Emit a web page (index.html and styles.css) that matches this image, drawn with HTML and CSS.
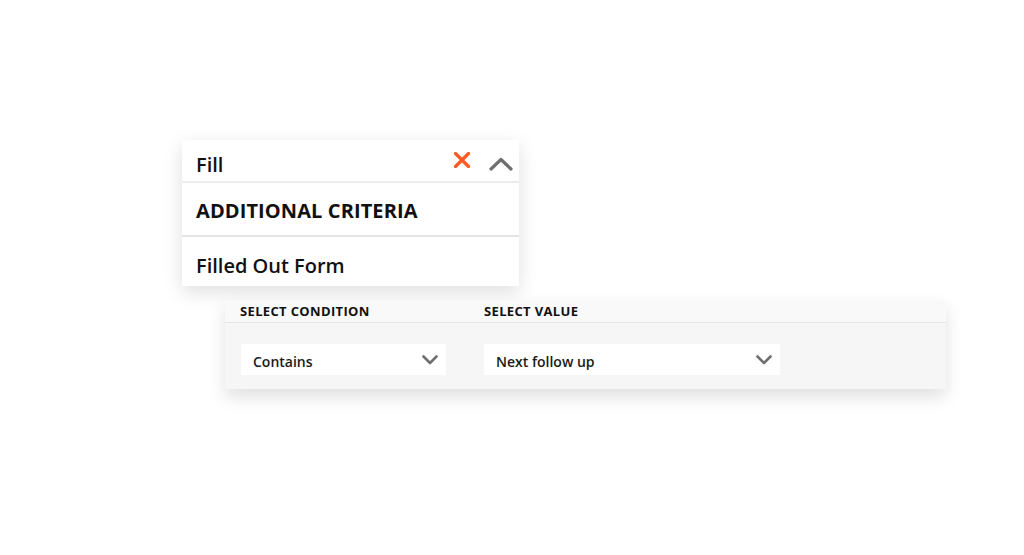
FILE: index.html
```html
<!DOCTYPE html>
<html lang="en">
<head>
<meta charset="utf-8">
<link rel="stylesheet" href="styles.css">
</head>
<body>
<div class="stage">
  <div class="filter-card">
    <div class="filter-head">
      <span class="filter-title">Fill</span>
      <span class="filter-icons">
        <svg class="icon-x" width="18" height="16" viewBox="0 0 18 16"><path d="M2.5 1.5 L15.5 14.5 M15.5 1.5 L2.5 14.5" stroke="#ff5a24" stroke-width="3.2" stroke-linecap="round" fill="none"/></svg>
        <svg class="icon-up" width="24" height="14" viewBox="0 0 24 14"><path d="M2 12 L12 2.5 L22 12" stroke="#6f6f6f" stroke-width="3.2" stroke-linecap="round" stroke-linejoin="round" fill="none"/></svg>
      </span>
    </div>
    <div class="filter-row filter-section">ADDITIONAL CRITERIA</div>
    <div class="filter-row filter-item">Filled Out Form</div>
  </div>

  <div class="cond-card">
    <div class="cond-head">
      <div class="cond-col cond-col-1">SELECT CONDITION</div>
      <div class="cond-col">SELECT VALUE</div>
    </div>
    <div class="cond-body">
      <div class="cond-col cond-col-1">
        <div class="select select-cond">
          <span>Contains</span>
          <svg width="16" height="10" viewBox="0 0 16 10"><path d="M1.5 1.5 L8 8 L14.5 1.5" stroke="#6f6f6f" stroke-width="2.6" stroke-linecap="round" stroke-linejoin="round" fill="none"/></svg>
        </div>
      </div>
      <div class="cond-col">
        <div class="select select-value">
          <span>Next follow up</span>
          <svg width="16" height="10" viewBox="0 0 16 10"><path d="M1.5 1.5 L8 8 L14.5 1.5" stroke="#6f6f6f" stroke-width="2.6" stroke-linecap="round" stroke-linejoin="round" fill="none"/></svg>
        </div>
      </div>
    </div>
  </div>
</div>
</body>
</html>
```

FILE: styles.css
```css
* { box-sizing: border-box; }
html, body { margin: 0; padding: 0; background: #ffffff; }
body {
  width: 1024px;
  height: 555px;
  overflow: hidden;
  font-family: "Open Sans", "Noto Sans", "Liberation Sans", sans-serif;
  color: #111111;
}
.stage {
  padding: 140px 0 0 182px;
}
.filter-card {
  width: 337px;
  background: #ffffff;
  box-shadow: 0 6px 18px rgba(0,0,0,0.13);
}
.filter-head {
  height: 43px;
  display: flex;
  align-items: center;
  justify-content: space-between;
  padding: 7px 6px 0 14px;
  border-bottom: 2px solid #ececec;
}
.filter-title {
  font-size: 20px;
  font-weight: 600;
}
.filter-icons {
  display: flex;
  align-items: center;
  gap: 18px;
  padding-bottom: 9px;
}
.icon-up { margin-top: 9px; }
.filter-row {
  display: flex;
  align-items: center;
  padding-left: 14px;
}
.filter-section {
  height: 54px;
  font-size: 20px;
  font-weight: 700;
  letter-spacing: 0.1px;
  border-bottom: 2px solid #e4e4e4;
  padding-top: 3px;
}
.filter-item {
  height: 49px;
  font-size: 20px;
  font-weight: 600;
  padding-top: 8px;
}
.cond-card {
  margin: 14px 0 0 43px;
  width: 721px;
  background: #f6f6f6;
  box-shadow: 0 8px 16px rgba(0,0,0,0.12);
}
.cond-head {
  height: 23px;
  display: flex;
  align-items: center;
  padding-left: 15px;
  background: #f9f9f9;
  border-bottom: 1px solid #e6e6e6;
  font-size: 13px;
  font-weight: 700;
  letter-spacing: 0.35px;
  color: #111;
}
.cond-col-1 { width: 244px; flex: none; }
.cond-body {
  display: flex;
  padding: 21px 0 14px 15px;
}
.select {
  height: 31px;
  background: #ffffff;
  display: flex;
  align-items: center;
  justify-content: space-between;
  padding: 4px 8px 0 12px;
  font-size: 14px;
  font-weight: 600;
  color: #1a1a1a;
}
.select svg { margin-top: -4px; }
.select-cond { width: 205px; margin-left: 1px; }
.select-value { width: 296px; }
```
